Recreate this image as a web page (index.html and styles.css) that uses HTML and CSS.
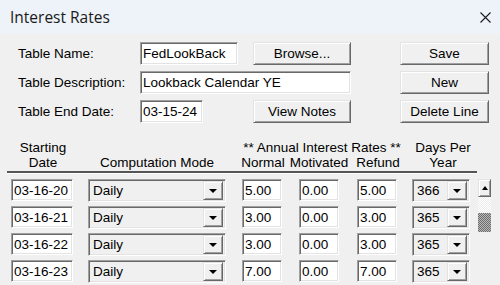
FILE: index.html
```html
<!DOCTYPE html>
<html lang="en">
<head>
  <meta charset="UTF-8" />
  <meta name="viewport" content="width=device-width, initial-scale=1.0"/>
  <title>Interest Rates</title>
  <link rel="stylesheet" href="styles.css">
</head>
<body>

  <header class="titlebar">
    <span class="title">Interest Rates</span>
    <svg class="close" width="11" height="11" viewBox="0 0 11 11">
      <path d="M0.5 0.5 L10.5 10.5 M10.5 0.5 L0.5 10.5" stroke="#1a1a1a" stroke-width="1.1" fill="none"/>
    </svg>
  </header>

  <!-- Datos de la tabla -->
  <section class="table-info">
    <label>Table Name:</label>
    <input class="field name" type="text" value="FedLookBack"/>
    <button class="btn">Browse...</button>
    <button class="btn side">Save</button>

    <label>Table Description:</label>
    <input class="field desc" type="text" value="Lookback Calendar YE"/>
    <button class="btn side">New</button>

    <label>Table End Date:</label>
    <input class="field end-date" type="text" value="03-15-24"/>
    <button class="btn">View Notes</button>
    <button class="btn side">Delete Line</button>
  </section>

  <!-- Tasas -->
  <section class="rates">
    <div class="rates-head">
      <div class="h h-date">Starting<br>Date</div>
      <div class="h h-mode">Computation Mode</div>
      <div class="h h-annual">** Annual Interest Rates **</div>
      <div class="h h-normal">Normal</div>
      <div class="h h-motiv">Motivated</div>
      <div class="h h-refund">Refund</div>
      <div class="h h-days">Days Per<br>Year</div>
    </div>
    <div class="rule"></div>

    <div class="rates-body">
      <div class="rows">
        <div class="row">
          <input class="field w-date" type="text" value="03-16-20"/>
          <div class="combo w-mode"><span>Daily</span><i class="drop"></i></div>
          <input class="field w-rate" type="text" value="5.00"/>
          <input class="field w-rate" type="text" value="0.00"/>
          <input class="field w-rate" type="text" value="5.00"/>
          <div class="combo w-days"><span>366</span><i class="drop"></i></div>
        </div>
        <div class="row">
          <input class="field w-date" type="text" value="03-16-21"/>
          <div class="combo w-mode"><span>Daily</span><i class="drop"></i></div>
          <input class="field w-rate" type="text" value="3.00"/>
          <input class="field w-rate" type="text" value="0.00"/>
          <input class="field w-rate" type="text" value="3.00"/>
          <div class="combo w-days"><span>365</span><i class="drop"></i></div>
        </div>
        <div class="row">
          <input class="field w-date" type="text" value="03-16-22"/>
          <div class="combo w-mode"><span>Daily</span><i class="drop"></i></div>
          <input class="field w-rate" type="text" value="3.00"/>
          <input class="field w-rate" type="text" value="0.00"/>
          <input class="field w-rate" type="text" value="3.00"/>
          <div class="combo w-days"><span>365</span><i class="drop"></i></div>
        </div>
        <div class="row">
          <input class="field w-date" type="text" value="03-16-23"/>
          <div class="combo w-mode"><span>Daily</span><i class="drop"></i></div>
          <input class="field w-rate" type="text" value="7.00"/>
          <input class="field w-rate" type="text" value="0.00"/>
          <input class="field w-rate" type="text" value="7.00"/>
          <div class="combo w-days"><span>365</span><i class="drop"></i></div>
        </div>
      </div>

      <div class="scrollbar">
        <div class="sb-up"></div>
        <div class="sb-track"></div>
        <div class="sb-thumb"></div>
      </div>
    </div>
  </section>

</body>
</html>
```

FILE: styles.css
```css
:root {
  --face: #f0f0f0;
  --light: #e3e3e3;
  --white: #fff;
  --shadow: #a0a0a0;
  --dark: #696969;
  --ui-font: "Liberation Sans", Arial, sans-serif;
}
* { box-sizing: border-box; margin: 0; padding: 0; }
body {
  width: 500px;
  height: 285px;
  overflow: hidden;
  background: var(--face);
  color: #000;
  font-family: var(--ui-font);
  font-size: 13.5px;
}

.titlebar {
  height: 34px;
  background: #eef3f9;
  display: flex;
  align-items: center;
  justify-content: space-between;
  padding: 0 9px 0 10px;
  font-family: "Open Sans", "Noto Sans", sans-serif;
  font-size: 15.5px;
  color: #1a1a1a;
}

/* Controles clásicos */
.field {
  height: 22px;
  background: var(--white);
  border: 1px solid;
  border-color: var(--shadow) var(--white) var(--white) var(--shadow);
  box-shadow: inset 1px 1px var(--dark), inset -1px -1px var(--light);
  padding: 0 2px;
  font: inherit;
  color: #000;
  outline: none;
}
.btn {
  height: 23px;
  background: var(--face);
  border: 1px solid;
  border-color: var(--light) var(--dark) var(--dark) var(--light);
  box-shadow: inset 1px 1px var(--white), inset -1px -1px var(--shadow);
  font: inherit;
  color: #000;
}

.table-info {
  display: grid;
  grid-template-columns: 122px 113px 147px 89px;
  grid-auto-rows: 23px;
  row-gap: 6px;
  padding: 8px 0 0 18px;
  align-items: center;
}
.table-info label { grid-column: 1; }
.table-info .field { height: 23px; }
.table-info .btn { width: 98px; }
.table-info .btn.side { grid-column: 4; width: 89px; }
.name { width: 98px; }
.desc { grid-column: 2 / span 2; width: 211px; }
.end-date { width: 63px; }

/* Encabezado de tasas */
.rates { margin-top: 17px; }
.rates-head {
  display: grid;
  grid-template-columns: 77px 154px 57px 58px 55px 66px;
  grid-template-rows: 15px 15px;
  line-height: 15px;
  padding-left: 11px;
}
.h {
  display: flex;
  justify-content: center;
  text-align: center;
  white-space: nowrap;
}
.h-date { grid-column: 1; grid-row: 1 / span 2; width: 64px; }
.h-mode { grid-column: 2; grid-row: 2; width: 138px; }
.h-annual { grid-column: 3 / span 3; grid-row: 1; width: 160px; }
.h-normal { grid-column: 3; grid-row: 2; width: 42px; }
.h-motiv { grid-column: 4; grid-row: 2; width: 40px; }
.h-refund { grid-column: 5; grid-row: 2; width: 42px; }
.h-days { grid-column: 6; grid-row: 1 / span 2; width: 62px; }

.rule {
  margin: 1px 0 0 7px;
  width: 470px;
  height: 2px;
  background: #555;
  box-shadow: 0 1px var(--white);
}

/* Filas */
.rates-body {
  display: flex;
  padding: 6px 0 0 11px;
}
.rows {
  display: flex;
  flex-direction: column;
  gap: 5px;
}
.row {
  display: grid;
  grid-template-columns: 77px 154px 57px 58px 55px 66px;
  height: 22px;
}
.w-date { width: 62px; }
.w-mode { width: 138px; }
.w-rate { width: 40px; }
.w-days { width: 58px; }

.combo {
  height: 23px;
  display: flex;
  align-items: center;
  background: var(--face);
  border: 1px solid;
  border-color: var(--shadow) var(--white) var(--white) var(--shadow);
  box-shadow: inset 1px 1px var(--dark), inset -1px -1px var(--light);
  padding: 2px 2px 2px 4px;
}
.combo span { flex: 1; }
.drop {
  width: 20px;
  height: 19px;
  display: flex;
  align-items: center;
  justify-content: center;
  border: 1px solid;
  border-color: var(--light) var(--dark) var(--dark) var(--light);
  box-shadow: inset 1px 1px var(--white), inset -1px -1px var(--shadow);
  background: var(--face);
}
.drop::after {
  content: "";
  border-left: 4px solid transparent;
  border-right: 4px solid transparent;
  border-top: 4px solid #000;
  margin-top: 1px;
}

/* Barra de desplazamiento */
.scrollbar {
  width: 13px;
  display: flex;
  flex-direction: column;
}
.sb-up {
  height: 18px;
  display: flex;
  align-items: center;
  justify-content: center;
  border: 1px solid;
  border-color: var(--light) var(--dark) var(--dark) var(--light);
  box-shadow: inset 1px 1px var(--white), inset -1px -1px var(--shadow);
}
.sb-up::after {
  content: "";
  border-left: 3px solid transparent;
  border-right: 3px solid transparent;
  border-bottom: 4px solid #000;
}
.sb-track {
  height: 16px;
  background: repeating-conic-gradient(#fff 0 25%, #ececec 0 50%) 0 0 / 2px 2px;
}
.sb-thumb {
  height: 19px;
  background: repeating-conic-gradient(#6e6e6e 0 25%, #b8b8b8 0 50%) 0 0 / 2px 2px;
}
```
